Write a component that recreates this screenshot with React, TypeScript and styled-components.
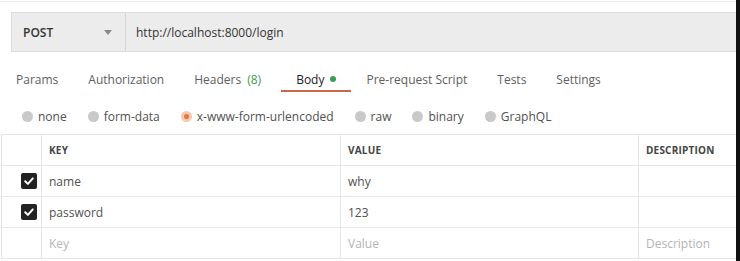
import React from "react";
import styled, { createGlobalStyle } from "styled-components";

const GlobalStyle = createGlobalStyle`
  body {
    margin: 0;
    background: #fff;
    font-family: "Open Sans", "Liberation Sans", sans-serif;
    color: #505050;
  }
`;

const Page = styled.div`
  display: flex;
  align-items: flex-start;
  width: 740px;
  height: 261px;
  overflow: hidden;
`;

const Panel = styled.div`
  width: 736px;
  flex-shrink: 0;
  margin-top: 1px;
  border-top: 1px solid #e8e8e8;
  display: flex;
  flex-direction: column;
`;

const Edge = styled.div`
  flex: 1;
  align-self: stretch;
  background: #111;
`;

const UrlBar = styled.div`
  display: flex;
  height: 38px;
  margin: 10px 0 0 11px;
  background: #ececec;
  border: 1px solid #dcdcdc;
  border-right: none;
`;

const Method = styled.div`
  width: 114px;
  display: flex;
  align-items: center;
  justify-content: space-between;
  padding: 0 13px 0 11px;
  box-sizing: border-box;
  border-right: 1px solid #d6d6d6;
  font-size: 12px;
  font-weight: 600;
  color: #333;
`;

const Caret = styled.span`
  width: 0;
  height: 0;
  border-left: 4px solid transparent;
  border-right: 4px solid transparent;
  border-top: 5px solid #8a8a8a;
`;

const Url = styled.div`
  display: flex;
  align-items: center;
  padding-left: 10px;
  font-size: 12px;
  color: #333;
`;

const Tabs = styled.div`
  display: flex;
  margin: 16px 0 0 1px;
  height: 24px;
`;

const Tab = styled.div<{ $active?: boolean }>`
  display: flex;
  align-items: center;
  gap: 6px;
  padding: 0 15px;
  margin-left: ${(p) => (p.$active ? "5px" : "0")};
  font-size: 12px;
  color: ${(p) => (p.$active ? "#222" : "#606060")};
  border-bottom: 2px solid ${(p) => (p.$active ? "#c9694a" : "transparent")};
`;

const Count = styled.span`
  color: #3c9a56;
`;

const Dot = styled.span`
  width: 6px;
  height: 6px;
  border-radius: 50%;
  background: #3c9a56;
`;

const Radios = styled.div`
  display: flex;
  align-items: center;
  height: 30px;
  margin: 9px 0 0 22px;
  gap: 21px;
`;

const Radio = styled.label`
  display: flex;
  align-items: center;
  gap: 5px;
  font-size: 12px;
  color: #505050;
`;

const Circle = styled.span<{ $on?: boolean }>`
  width: 11px;
  height: 11px;
  border-radius: 50%;
  box-sizing: border-box;
  background: ${(p) => (p.$on ? "#e8743f" : "#c9c9c9")};
  border: ${(p) => (p.$on ? "3px solid #f6c8ae" : "none")};
`;

const Table = styled.div`
  margin: 3px 0 0 1px;
  border-left: 1px solid #e6e6e6;
  border-bottom: 1px solid #e6e6e6;
  display: grid;
  grid-template-columns: 39px 299px 298px 1fr;
`;

const Cell = styled.div<{ $head?: boolean; $first?: boolean }>`
  height: 30px;
  display: flex;
  align-items: center;
  padding: 0 7px;
  border-top: 1px solid #e6e6e6;
  border-left: ${(p) => (p.$first ? "none" : "1px solid #e6e6e6")};
  font-size: ${(p) => (p.$head ? "10px" : "12px")};
  font-weight: ${(p) => (p.$head ? 700 : 400)};
  color: ${(p) => (p.$head ? "#444" : "#505050")};
  letter-spacing: ${(p) => (p.$head ? "0.2px" : "0")};
`;

const CheckCell = styled(Cell)`
  padding: 0 0 0 19px;
`;

const Placeholder = styled.span`
  color: #b4b4b4;
`;

const Box = styled.span`
  width: 16px;
  height: 16px;
  border-radius: 2px;
  background: #222;
  display: flex;
  align-items: center;
  justify-content: center;
`;

const Check = () => (
  <Box>
    <svg width="12" height="12" viewBox="0 0 12 12">
      <path d="M2.2 6.3 L4.9 8.9 L9.8 3.4" fill="none" stroke="#fff" strokeWidth="2" strokeLinecap="round" strokeLinejoin="round" />
    </svg>
  </Box>
);

const rows = [
  { key: "name", value: "why" },
  { key: "password", value: "123" },
];

const tabs = ["Params", "Authorization", "Headers", "Body", "Pre-request Script", "Tests", "Settings"];
const bodyTypes = ["none", "form-data", "x-www-form-urlencoded", "raw", "binary", "GraphQL"];

export default function App() {
  return (
    <Page>
      <GlobalStyle />
      <Panel>
        <UrlBar>
          <Method>
            POST
            <Caret />
          </Method>
          <Url>http://localhost:8000/login</Url>
        </UrlBar>

        <Tabs>
          {tabs.map((t) => (
            <Tab key={t} $active={t === "Body"}>
              {t}
              {t === "Headers" && <Count>(8)</Count>}
              {t === "Body" && <Dot />}
            </Tab>
          ))}
        </Tabs>

        <Radios>
          {bodyTypes.map((b) => (
            <Radio key={b}>
              <Circle $on={b === "x-www-form-urlencoded"} />
              {b}
            </Radio>
          ))}
        </Radios>

        <Table>
          <Cell $head $first />
          <Cell $head>KEY</Cell>
          <Cell $head>VALUE</Cell>
          <Cell $head>DESCRIPTION</Cell>
          {rows.map((r) => (
            <React.Fragment key={r.key}>
              <CheckCell $first>
                <Check />
              </CheckCell>
              <Cell>{r.key}</Cell>
              <Cell>{r.value}</Cell>
              <Cell />
            </React.Fragment>
          ))}
          <Cell $first />
          <Cell>
            <Placeholder>Key</Placeholder>
          </Cell>
          <Cell>
            <Placeholder>Value</Placeholder>
          </Cell>
          <Cell>
            <Placeholder>Description</Placeholder>
          </Cell>
        </Table>
      </Panel>
      <Edge />
    </Page>
  );
}
